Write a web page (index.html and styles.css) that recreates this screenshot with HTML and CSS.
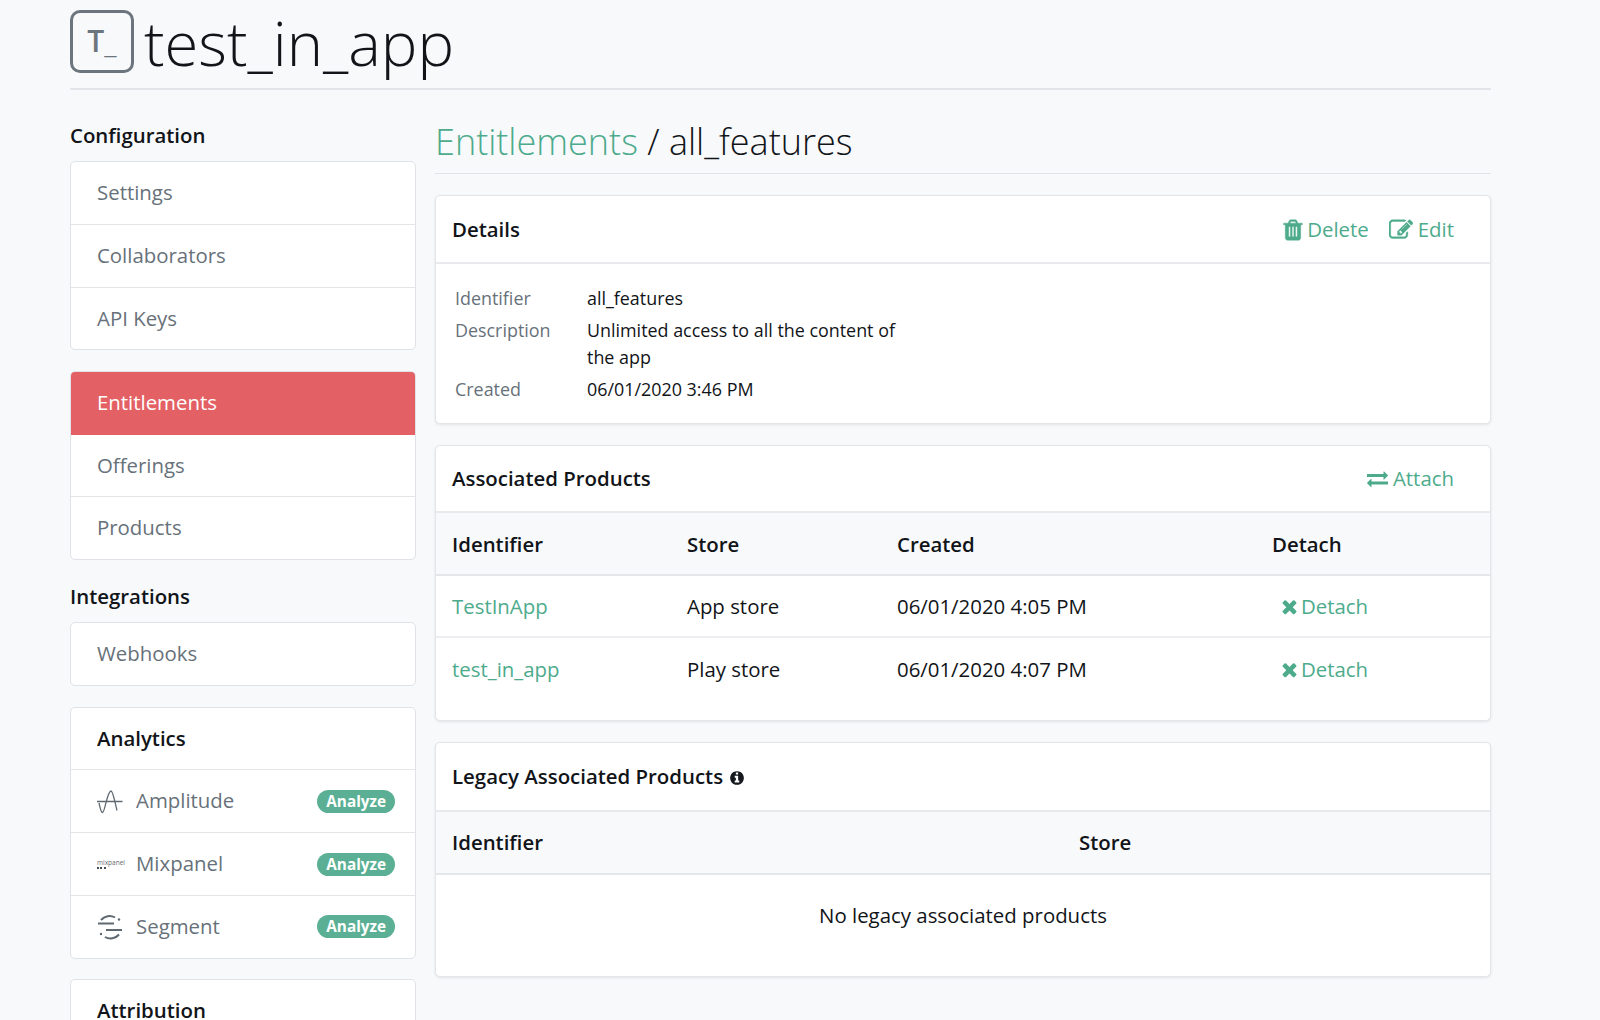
FILE: index.html
```html
<!DOCTYPE html>
<html lang="en">
<head>
<meta charset="utf-8">
<title>test_in_app</title>
<link rel="stylesheet" href="styles.css">
</head>
<body>
<div class="page">
  <header class="app-head">
    <div class="app-icon"><span class="app-t">T</span><span class="app-u">_</span></div>
    <h1 class="app-name">test_in_app</h1>
  </header>
  <div class="columns">
    <aside class="side">
      <h2 class="side-title">Configuration</h2>
      <div class="list">
        <a class="item">Settings</a>
        <a class="item">Collaborators</a>
        <a class="item">API Keys</a>
      </div>
      <div class="list list-gap">
        <a class="item active">Entitlements</a>
        <a class="item">Offerings</a>
        <a class="item">Products</a>
      </div>
      <h2 class="side-title side-title-b">Integrations</h2>
      <div class="list">
        <a class="item">Webhooks</a>
      </div>
      <div class="list list-gap">
        <div class="item item-head">Analytics</div>
        <a class="item item-int">
          <svg class="int-icon" viewBox="0 0 26 26"><path d="M0 13.500h25.500M2 15Q4 24.500 5.500 24.500C8 24.500 10 3.500 14 3 16 3 18 15 20 22.500" fill="none" stroke="#5f6972" stroke-width="1.300"/></svg>
          <span class="int-name">Amplitude</span><span class="badge">Analyze</span>
        </a>
        <a class="item item-int">
          <span class="int-icon mix"><span class="mix-text">mixpanel</span><span class="mix-dots"></span></span>
          <span class="int-name">Mixpanel</span><span class="badge">Analyze</span>
        </a>
        <a class="item item-int">
          <svg class="int-icon" viewBox="0 0 26 26"><path d="M4 6A11 11 0 0 1 18 3.500M1 9.500h16M9 16h16M8 23A11 11 0 0 0 22 20.500" fill="none" stroke="#5f6972" stroke-width="2"/><circle cx="22" cy="5.500" r="1.200" fill="#5f6972"/><circle cx="4" cy="20" r="1.200" fill="#5f6972"/></svg>
          <span class="int-name">Segment</span><span class="badge">Analyze</span>
        </a>
      </div>
      <div class="list list-gap">
        <div class="item item-head">Attribution</div>
      </div>
    </aside>
    <main class="main">
      <h2 class="crumb"><a class="crumb-link">Entitlements</a> / all_features</h2>
      <section class="card">
        <div class="card-head">
          <h3 class="card-title">Details</h3>
          <div class="actions">
            <a class="action"><svg class="ic ic-trash" viewBox="0 0 1792 1792"><path d="M704 1376v-704q0-14-9-23t-23-9h-64q-14 0-23 9t-9 23v704q0 14 9 23t23 9h64q14 0 23-9t9-23zm256 0v-704q0-14-9-23t-23-9h-64q-14 0-23 9t-9 23v704q0 14 9 23t23 9h64q14 0 23-9t9-23zm256 0v-704q0-14-9-23t-23-9h-64q-14 0-23 9t-9 23v704q0 14 9 23t23 9h64q14 0 23-9t9-23zm-544-992h448l-48-117q-7-9-17-11h-317q-10 2-17 11zm928 32v64q0 14-9 23t-23 9h-96v948q0 83-47 143.500t-113 60.500h-832q-66 0-113-58.500t-47-141.500v-952h-96q-14 0-23-9t-9-23v-64q0-14 9-23t23-9h309l70-167q15-37 54-63t79-26h320q40 0 79 26t54 63l70 167h309q14 0 23 9t9 23z"/></svg>Delete</a>
            <a class="action"><svg class="ic ic-edit" viewBox="0 0 1792 1792"><path d="M888 1184l116-116-152-152-116 116v56h96v96h56zm440-720q-16-16-33 1l-350 350q-17 17-1 33t33-1l350-350q17-17 1-33zm80 594v190q0 119-84.500 203.500t-203.500 84.500h-832q-119 0-203.500-84.500t-84.500-203.500v-832q0-119 84.500-203.500t203.500-84.500h832q63 0 117 25 15 7 18 23 3 17-9 29l-49 49q-14 14-32 8-23-6-45-6h-832q-66 0-113 47t-47 113v832q0 66 47 113t113 47h832q66 0 113-47t47-113v-126q0-13 9-22l64-64q15-15 35-7t20 29zm-96-738l288 288-672 672h-288v-288zm444 132l-92 92-288-288 92-92q28-28 68-28t68 28l152 152q28 28 28 68t-28 68z"/></svg>Edit</a>
          </div>
        </div>
        <dl class="facts">
          <dt>Identifier</dt><dd>all_features</dd>
          <dt>Description</dt><dd>Unlimited access to all the content of the app</dd>
          <dt>Created</dt><dd>06/01/2020 3:46 PM</dd>
        </dl>
      </section>
      <section class="card">
        <div class="card-head">
          <h3 class="card-title">Associated Products</h3>
          <div class="actions">
            <a class="action"><svg class="ic ic-swap" viewBox="0 0 1792 1792"><path d="M1792 1184v192q0 13-9.500 22.500t-22.500 9.500h-1376v192q0 13-9.500 22.500t-22.500 9.500q-12 0-24-10l-319-320q-9-9-9-22 0-14 9-23l320-320q9-9 23-9 13 0 22.500 9.500t9.500 22.500v192h1376q13 0 22.500 9.500t9.500 22.500zm0-544q0 14-9 23l-320 320q-9 9-23 9-13 0-22.500-9.500t-9.500-22.500v-192h-1376q-13 0-22.500-9.500t-9.500-22.500v-192q0-13 9.500-22.500t22.500-9.500h1376v-192q0-14 9-23t23-9q12 0 24 10l319 319q9 9 9 23z"/></svg>Attach</a>
          </div>
        </div>
        <table class="tbl">
          <colgroup><col class="c1"><col class="c2"><col class="c3"><col></colgroup>
          <thead><tr><th>Identifier</th><th>Store</th><th>Created</th><th>Detach</th></tr></thead>
          <tbody>
            <tr><td><a class="link">TestInApp</a></td><td>App store</td><td>06/01/2020 4:05 PM</td><td><a class="detach"><svg class="ic ic-x" viewBox="0 0 1408 1792"><path d="M1298 1322q0 40-28 68l-136 136q-28 28-68 28t-68-28l-294-294-294 294q-28 28-68 28t-68-28l-136-136q-28-28-28-68t28-68l294-294-294-294q-28-28-28-68t28-68l136-136q28-28 68-28t68 28l294 294 294-294q28-28 68-28t68 28l136 136q28 28 28 68t-28 68l-294 294 294 294q28 28 28 68z"/></svg>Detach</a></td></tr>
            <tr><td><a class="link">test_in_app</a></td><td>Play store</td><td>06/01/2020 4:07 PM</td><td><a class="detach"><svg class="ic ic-x" viewBox="0 0 1408 1792"><path d="M1298 1322q0 40-28 68l-136 136q-28 28-68 28t-68-28l-294-294-294 294q-28 28-68 28t-68-28l-136-136q-28-28-28-68t28-68l294-294-294-294q-28-28-28-68t28-68l136-136q28-28 68-28t68 28l294 294 294-294q28-28 68-28t68 28l136 136q28 28 28 68t-28 68l-294 294 294 294q28 28 28 68z"/></svg>Detach</a></td></tr>
          </tbody>
        </table>
        <div class="card-foot"></div>
      </section>
      <section class="card">
        <div class="card-head card-head-tall">
          <h3 class="card-title">Legacy Associated Products <svg class="ic-info" viewBox="0 0 1792 1792"><path d="M1152 1376v-160q0-14-9-23t-23-9h-96v-512q0-14-9-23t-23-9h-320q-14 0-23 9t-9 23v160q0 14 9 23t23 9h96v320h-96q-14 0-23 9t-9 23v160q0 14 9 23t23 9h448q14 0 23-9t9-23zm-128-896v-160q0-14-9-23t-23-9h-192q-14 0-23 9t-9 23v160q0 14 9 23t23 9h192q14 0 23-9t9-23zm640 416q0 209-103 385.500t-279.500 279.500-385.500 103-385.500-103-279.500-279.500-103-385.500 103-385.500 279.500-279.500 385.500-103 385.500 103 279.500 279.500 103 385.500z"/></svg></h3>
        </div>
        <table class="tbl">
          <colgroup><col class="c-wide"><col></colgroup>
          <thead><tr><th>Identifier</th><th>Store</th></tr></thead>
        </table>
        <p class="empty">No legacy associated products</p>
      </section>
    </main>
  </div>
</div>
</body>
</html>
```
FILE: styles.css
```css
* { box-sizing: border-box; }
html, body { height: 1020px; overflow: hidden; }
body {
  margin: 0;
  background: #f8f9fb;
  color: #111418;
  font-family: "Open Sans", sans-serif;
  font-size: 20.4px;
  line-height: 30px;
}
.page { width: 1421px; margin-left: 70px; padding-top: 10px; }
.app-head {
  display: flex;
  align-items: center;
  gap: 10px;
  height: 80px;
  padding-bottom: 15px;
  border-bottom: 2px solid #e1e4e8;
}
.app-icon {
  width: 64px;
  height: 63px;
  flex: none;
  border: 3px solid #6c757d;
  border-radius: 10px;
  color: #6c757d;
  display: flex;
  align-items: center;
  justify-content: center;
  padding-bottom: 2px;
}
.app-t { font-size: 30px; font-weight: 600; line-height: 1; }
.app-u { font-size: 30px; font-weight: 300; line-height: 1; position: relative; top: 1px; }
.app-name { margin: -10px 0; font-size: 61.5px; font-weight: 300; line-height: 84px; }
.columns { display: flex; gap: 19px; padding-top: 30px; }
.side { width: 346px; flex: none; }
.main { width: 1056px; flex: none; }
.side-title { margin: 0 0 12px; font-size: 20.4px; font-weight: 600; line-height: 27px; padding-top: 2px; }
.side-title-b { margin-top: 21px; margin-bottom: 12px; }
.list {
  background: #fff;
  border: 1px solid #dfe2e6;
  border-radius: 5px;
  overflow: hidden;
}
.list-gap { margin-top: 20.5px; }
.item {
  display: block;
  height: 62.8px;
  padding: 0 26px;
  line-height: 61.8px;
  color: #67717a;
  border-bottom: 1px solid #e4e6ea;
}
.item:last-child { border-bottom: 0; height: 61.8px; }
.item.active { background: #e36164; color: #fff; border-bottom-color: #e36164; }
.item-head { color: #111418; font-weight: 600; }
.item-int { display: flex; align-items: center; padding-right: 20px; }
.int-icon { width: 26px; height: 26px; flex: none; margin-right: 13px; }
.int-name { flex: 1; }
.mix { display: flex; flex-direction: column; justify-content: center; align-items: flex-start; }
.mix-text { font-size: 6.5px; line-height: 6px; color: #5f6972; white-space: nowrap; }
.mix-dots { width: 9px; height: 2px; margin-top: 1px; background: repeating-linear-gradient(90deg, #444c54 0 2px, transparent 2px 3.5px); }
.badge {
  background: #5baf94;
  color: #fff;
  font-size: 15.3px;
  font-weight: 700;
  line-height: 23px;
  height: 23px;
  padding: 0 9px;
  border-radius: 12px;
}
.crumb {
  margin: 0;
  font-size: 36px;
  font-weight: 300;
  line-height: 44px;
  padding-bottom: 9px;
  border-bottom: 1px solid #e1e4e8;
}
.crumb-link { color: #4dab8c; }
.card {
  background: #fff;
  border: 1px solid #e3e5e9;
  border-radius: 5px;
  box-shadow: 0 1px 3px rgba(0,0,0,.09);
  margin-top: 21px;
  overflow: hidden;
}
.card-head {
  display: flex;
  align-items: center;
  justify-content: space-between;
  height: 67.5px;
  padding: 0 36px 0 16px;
  border-bottom: 2px solid #e8eaed;
}
.card-head-tall { height: 68.5px; }
.card-title { margin: 0; font-size: 20.4px; font-weight: 600; line-height: 30px; }
.actions { display: flex; gap: 21px; }
.action, .detach { color: #4dab8c; white-space: nowrap; }
.ic { width: 24px; height: 24px; fill: #4dab8c; stroke: #4dab8c; stroke-width: 30px; vertical-align: -5px; margin: 0 3px 0 -1px; }
.ic-trash { margin-right: 2px; }
.ic-edit { margin-right: 5px; }
.ic-swap { width: 21px; height: 21px; margin: 0 5px 0 0; vertical-align: -3px; stroke-width: 0; }
.ic-x { width: 17px; height: 21px; margin: 0 3px 0 0; vertical-align: -3px; stroke-width: 0; }
.ic-info { width: 16px; height: 16px; fill: #15191d; vertical-align: -2px; margin-left: 1px; }
.facts {
  display: grid;
  grid-template-columns: 132px 310px;
  margin: 0;
  padding: 21px 0 20px 19px;
  font-size: 17.9px;
  line-height: 27px;
  row-gap: 5px;
}
.facts dt { color: #67717a; }
.facts dd { margin: 0; }
.tbl { width: 100%; border-collapse: collapse; table-layout: fixed; }
.tbl th {
  background: #f8f9fb;
  text-align: left;
  font-weight: 600;
  height: 62px;
  padding: 0 16px;
  border-bottom: 2px solid #e4e6ea;
}
.tbl td { height: 62px; padding: 0 16px; border-bottom: 2px solid #eceef1; }
.tbl tbody tr:last-child td { border-bottom: 0; }
.c1 { width: 235px; }
.c2 { width: 210px; }
.c3 { width: 375px; }
.c-wide { width: 627px; }
.link { color: #4dab8c; }
.detach { margin-left: 9px; }
.card-foot { height: 21px; }
.empty { margin: 0; padding: 25px 0 46px; text-align: center; }
```
